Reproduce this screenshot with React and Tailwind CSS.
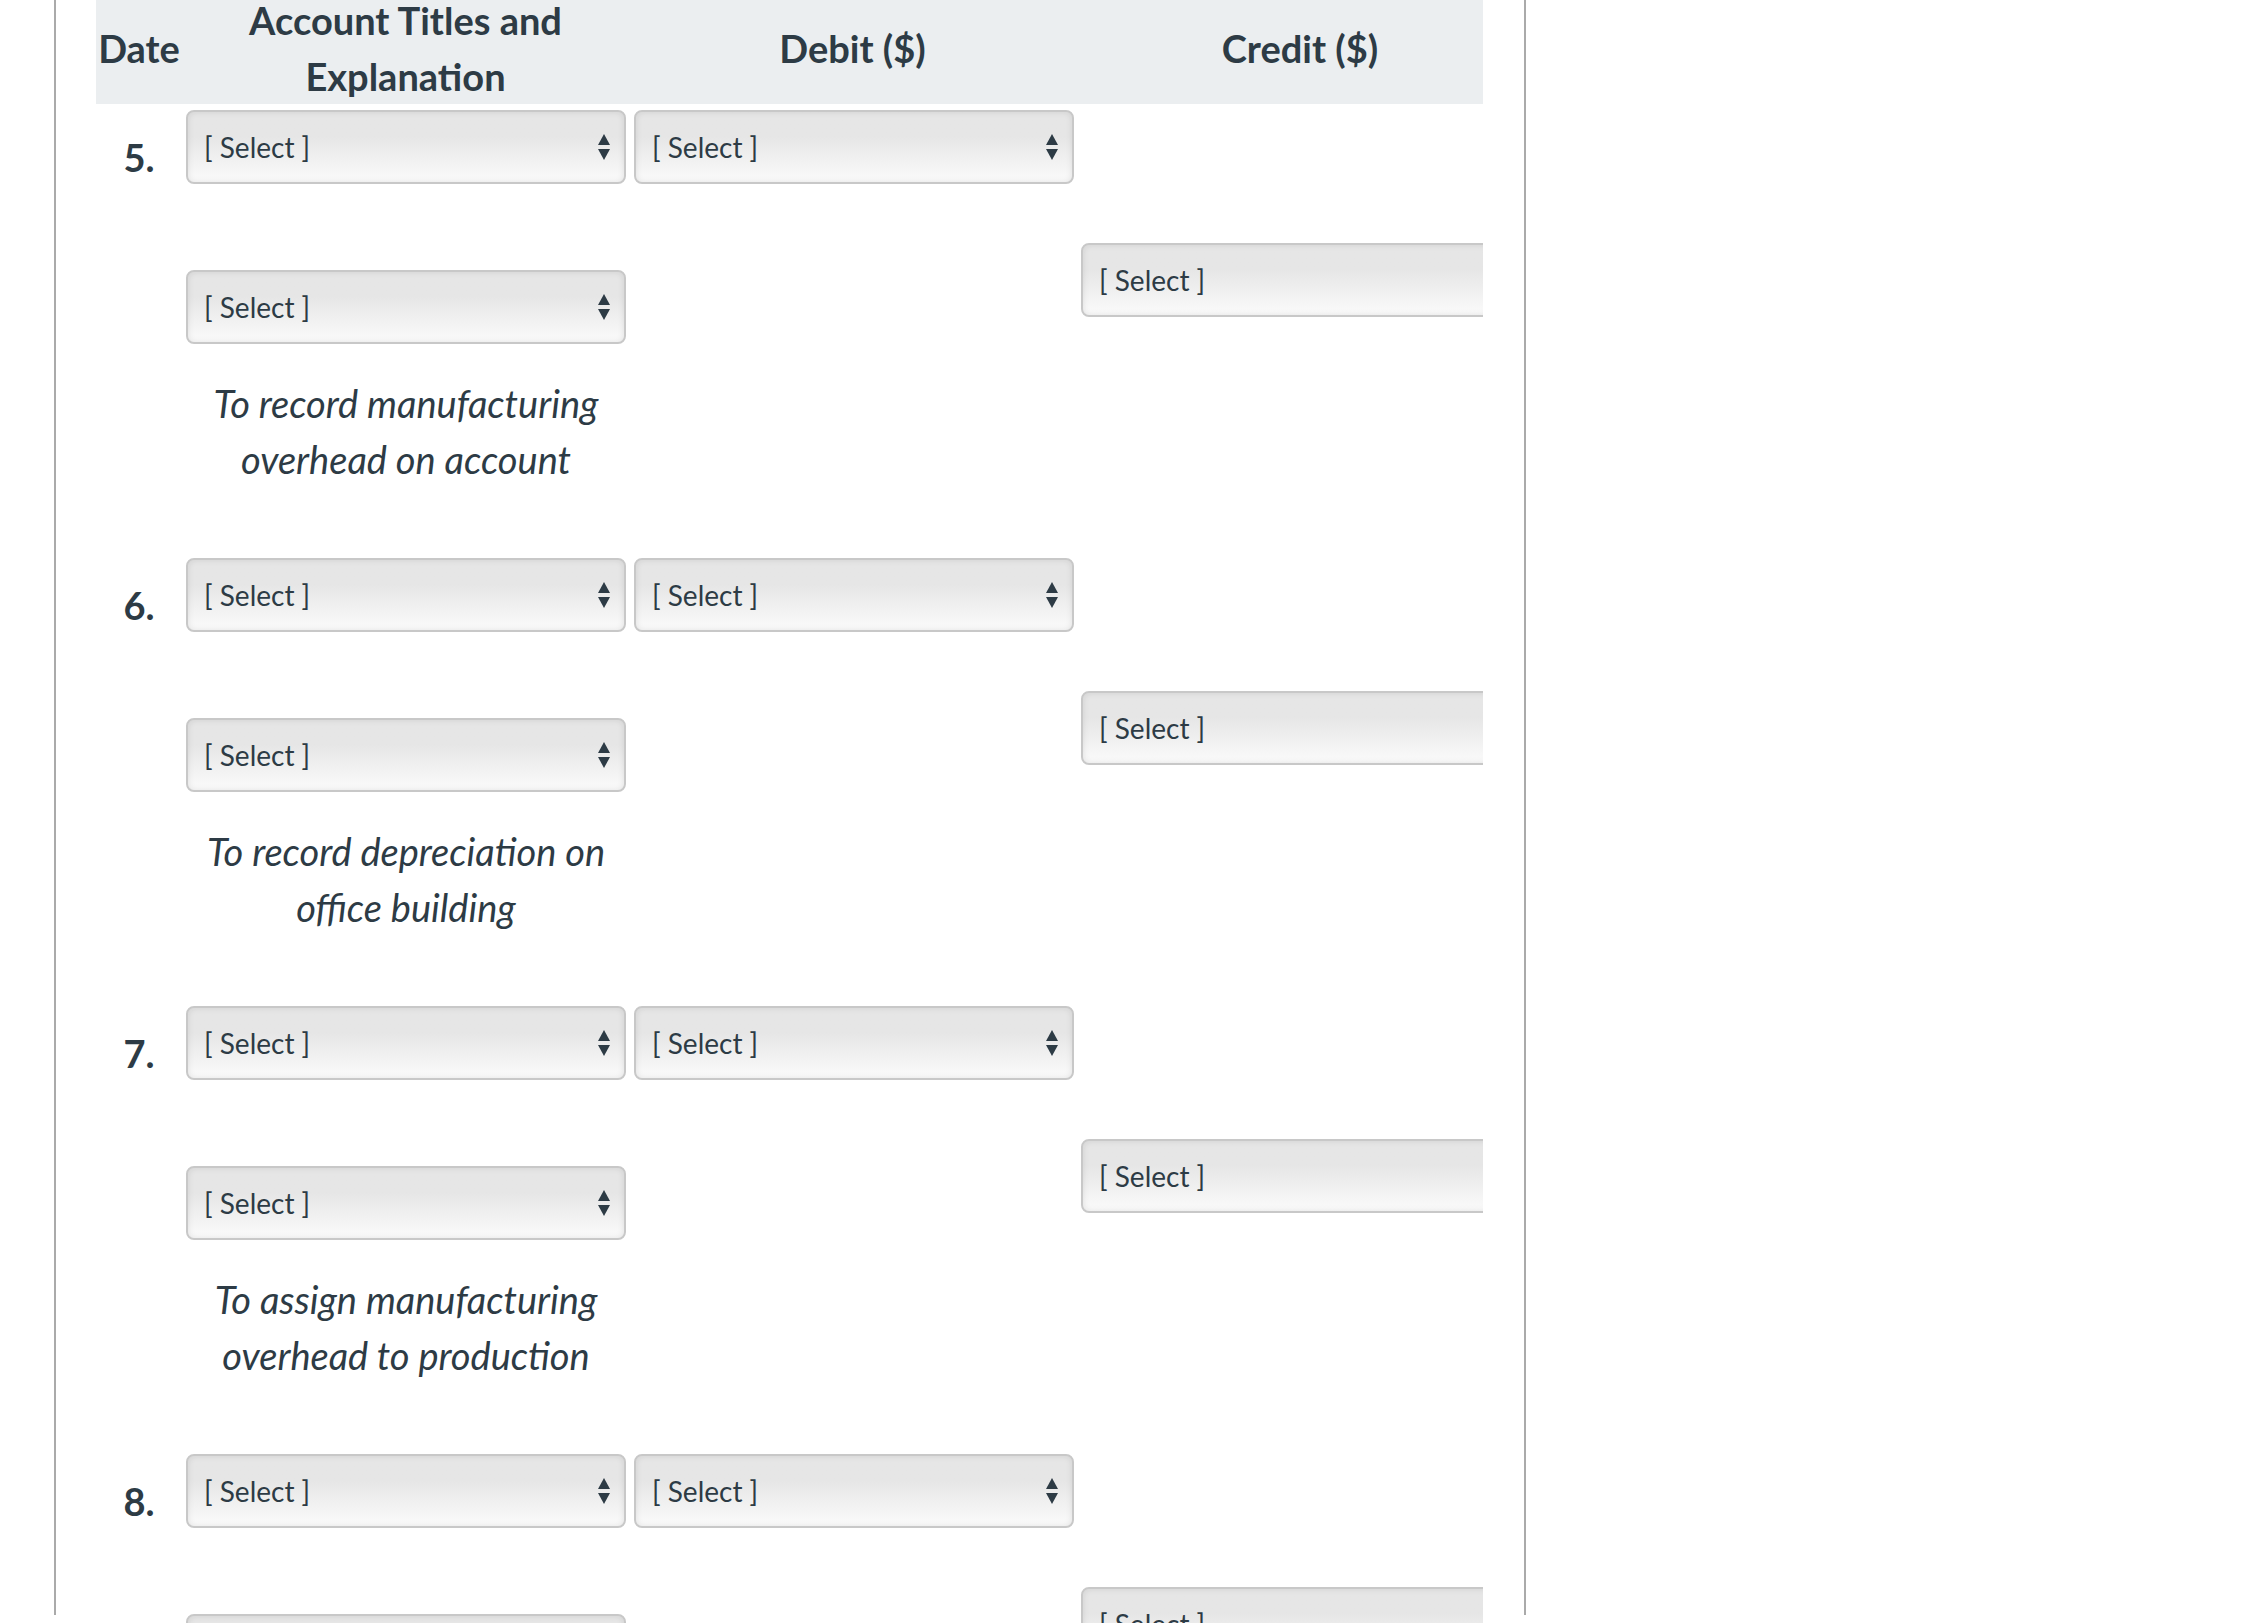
import React from "react";

const entries = [
  { n: "5.", text: ["To record manufacturing", "overhead on account"] },
  { n: "6.", text: ["To record depreciation on", "office building"] },
  { n: "7.", text: ["To assign manufacturing", "overhead to production"] },
  { n: "8.", text: ["To record the cost of", "goods manufactured"] },
];

const SelectBox = () => (
  <div className="w-[440px] h-[74px] rounded-[8px] border-2 border-[#c8c8c8] bg-linear-to-b from-[#e6e6e6] from-35% to-[#fbfbfb] shadow-[inset_0_0_6px_rgba(0,0,0,0.1)] flex items-center justify-between pl-[16px] pr-[14px]">
    <span className="text-[28px] leading-none">[ Select ]</span>
    <svg width="12" height="26" viewBox="0 0 12 26" className="fill-[#2d3b45]">
      <polygon points="0,11 6,0 12,11" />
      <polygon points="0,15 12,15 6,26" />
    </svg>
  </div>
);

const Entry = ({ n, text }) => (
  <div className="grid grid-cols-[86px_447px_447px_448px] grid-rows-[139px_auto] h-[448px]">
    {/* debit line */}
    <div className="pt-[25px] text-center font-bold text-[38px] leading-[56px]">{n}</div>
    <div className="pt-[6px] pl-[4px]">
      <SelectBox />
    </div>
    <div className="pt-[6px] pl-[5px]">
      <SelectBox />
    </div>
    <div />

    {/* credit line + explanation */}
    <div />
    <div className="pt-[27px] pl-[4px]">
      <SelectBox />
      <p className="mt-[31px] w-[440px] text-center italic text-[38px] leading-[56px]">
        {text[0]}
        <br />
        {text[1]}
      </p>
    </div>
    <div />
    <div className="pl-[5px]">
      <SelectBox />
    </div>
  </div>
);

export default function App() {
  return (
    <div className="h-[1623px] overflow-hidden bg-white text-[#2d3b45] font-['Lato',sans-serif]">
      <div className="ml-[54px] w-[1472px] h-[1623px] border-x-2 border-[#aaaaaa] pl-[40px] pr-[41px]">
        <div className="w-[1387px] overflow-hidden -mt-[8px]">
          <div className="w-[1428px]">
            <div className="grid grid-cols-[86px_447px_447px_448px] h-[112px] items-center bg-[#ebeef0] text-center font-bold text-[38px] leading-[56px]">
              <div>Date</div>
              <div>
                Account Titles and
                <br />
                Explanation
              </div>
              <div>Debit ($)</div>
              <div>Credit ($)</div>
            </div>
            {entries.map((e) => (
              <Entry key={e.n} {...e} />
            ))}
          </div>
        </div>
      </div>
    </div>
  );
}
